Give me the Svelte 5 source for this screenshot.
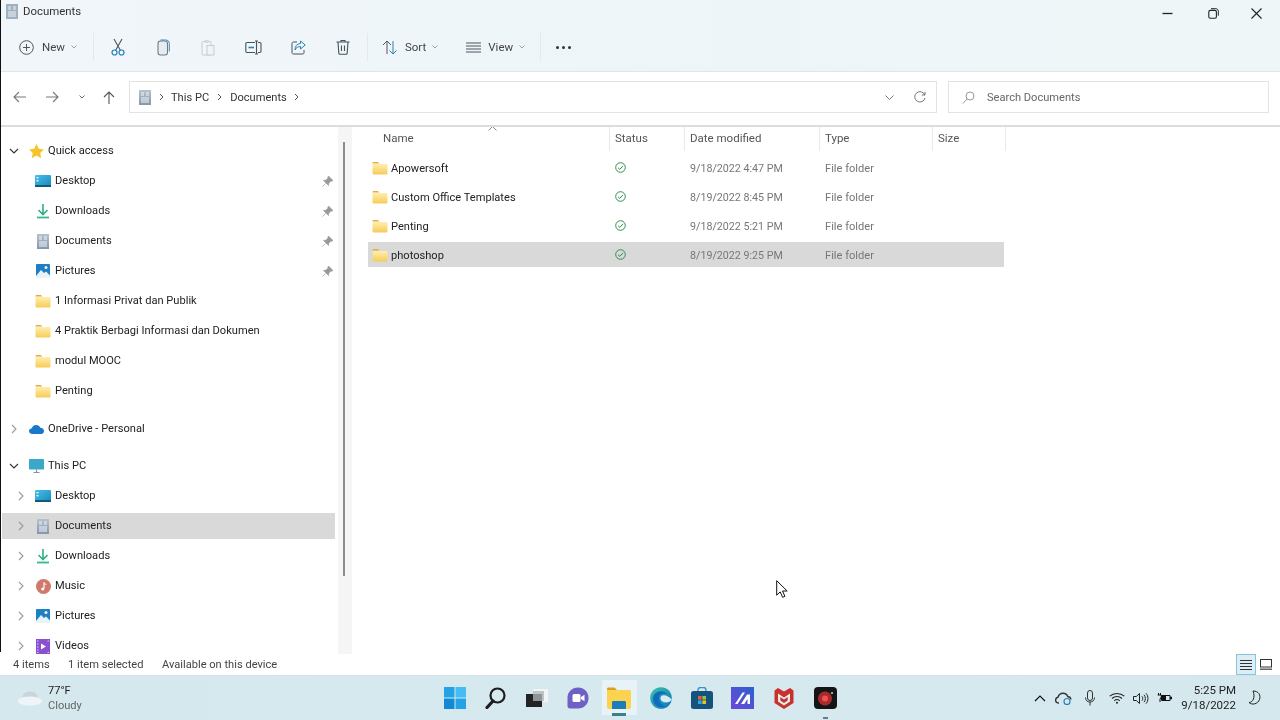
<script>
  const quick = [
    { icon: 'desktop', label: 'Desktop', pin: true },
    { icon: 'download', label: 'Downloads', pin: true },
    { icon: 'doc', label: 'Documents', pin: true },
    { icon: 'pictures', label: 'Pictures', pin: true },
    { icon: 'folder', label: '1 Informasi Privat dan Publik' },
    { icon: 'folder', label: '4 Praktik Berbagi Informasi dan Dokumen' },
    { icon: 'folder', label: 'modul MOOC' },
    { icon: 'folder', label: 'Penting' }
  ];
  const pc = [
    { icon: 'desktop', label: 'Desktop' },
    { icon: 'doc', label: 'Documents', active: true },
    { icon: 'download', label: 'Downloads' },
    { icon: 'music', label: 'Music' },
    { icon: 'pictures', label: 'Pictures' },
    { icon: 'videos', label: 'Videos' }
  ];
  const files = [
    { name: 'Apowersoft', date: '9/18/2022 4:47 PM' },
    { name: 'Custom Office Templates', date: '8/19/2022 8:45 PM' },
    { name: 'Penting', date: '9/18/2022 5:21 PM' },
    { name: 'photoshop', date: '8/19/2022 9:25 PM', selected: true }
  ];
</script>

{#snippet glyph(kind)}
  {#if kind === 'folder'}
    <svg class="ico" viewBox="0 0 16 14" width="16" height="14"><defs><linearGradient id="fg" x1="0" y1="0" x2="0" y2="1"><stop offset="0" stop-color="#ffeeb0"/><stop offset="1" stop-color="#f7cc55"/></linearGradient></defs><path d="M0.500 2.200c0-.7.500-1.200 1.200-1.200h3.600c.4 0 .7.100 1 .4L7.600 2.600H.5z" fill="#dfae3e"/><path d="M.5 3h14c.6 0 1 .4 1 1v8.200c0 .7-.5 1.300-1.200 1.300H1.700c-.7 0-1.200-.6-1.200-1.300z" fill="url(#fg)"/></svg>
  {:else if kind === 'desktop'}
    <svg class="ico" viewBox="0 0 16 12" width="16" height="12"><defs><linearGradient id="dk" x1="0" y1="0" x2="1" y2="1"><stop offset="0" stop-color="#46c2e8"/><stop offset="1" stop-color="#1a86bd"/></linearGradient></defs><rect width="16" height="12" rx="1" fill="url(#dk)"/><rect y="10" width="16" height="2" fill="#14587a"/><rect x="1.500" y="2" width="2" height="1.400" fill="#dff4fb"/><rect x="1.500" y="5" width="2" height="1.400" fill="#dff4fb"/></svg>
  {:else if kind === 'download'}
    <svg class="ico" viewBox="0 0 14 16" width="14" height="16"><path d="M7 1v10M2.500 7 7 11.500 11.500 7" fill="none" stroke="#2fae86" stroke-width="1.600"/><path d="M1 14.500h12" stroke="#35b78f" stroke-width="1.800"/></svg>
  {:else if kind === 'doc'}
    <svg class="ico" viewBox="0 0 12 15" width="12" height="15"><defs><linearGradient id="dg" x1="0" y1="0" x2="0" y2="1"><stop offset="0" stop-color="#b6c2cf"/><stop offset="1" stop-color="#8397ab"/></linearGradient></defs><rect width="12" height="15" fill="url(#dg)"/><path d="M2 3h3M2 5h3M7 3h3M7 5h3M2 8h8M2 10h8M2 12h8" stroke="#f2f5f8" stroke-width="1"/></svg>
  {:else if kind === 'pictures'}
    <svg class="ico" viewBox="0 0 14 14" width="14" height="14"><rect width="14" height="14" rx="1" fill="#1f7fc4"/><path d="M0 12 5 6l3 3 2-1.500 4 4V14H0z" fill="#e8f3fb"/><circle cx="10" cy="3.500" r="1.500" fill="#e8f3fb"/></svg>
  {:else if kind === 'music'}
    <svg class="ico" viewBox="0 0 15 15" width="15" height="15"><circle cx="7.500" cy="7.500" r="7.500" fill="#d0786a"/><path d="M8 3.500v6.300" stroke="#fff" stroke-width="1.200"/><circle cx="6.700" cy="10" r="1.500" fill="#fff"/><path d="M8 3.500c.5 1.500 2 1.500 2.500 2.500" stroke="#fff" fill="none"/></svg>
  {:else if kind === 'videos'}
    <svg class="ico" viewBox="0 0 14 15" width="14" height="15"><rect width="14" height="15" fill="#8b4fd0"/><path d="M5 4.500v6l5-3z" fill="#fff"/><path d="M1 2h1.500M1 5h1.500M1 8h1.500M1 11h1.500M1 13.500h1.500M11.500 2H13M11.500 13.500H13" stroke="#d9c4f3" stroke-width="1.200"/></svg>
  {:else if kind === 'pin'}
    <svg class="ico" viewBox="0 0 11 11" width="11" height="11"><path d="M6.500 0 11 4.500 9.800 5.200 8.800 5 6.700 7.500 6.600 9.600 1.400 4.400 3.500 4.300 6 2.200 5.800 1.200zM3.600 7.400.2 10.800" fill="#999" stroke="#999" stroke-width=".6"/></svg>
  {:else if kind === 'down'}
    <svg class="ico" viewBox="0 0 10 6" width="10" height="6"><path d="M1 1l4 4 4-4" fill="none" stroke="#333" stroke-width="1.100"/></svg>
  {:else if kind === 'right'}
    <svg class="ico" viewBox="0 0 6 10" width="6" height="10"><path d="M1 1l4 4-4 4" fill="none" stroke="#9a9a9a" stroke-width="1.100"/></svg>
  {:else if kind === 'minichev'}
    <svg class="ico mini" viewBox="0 0 6 4" width="6" height="4"><path d="M.5.500 3 3 5.500.5" fill="none" stroke="#999" stroke-width=".9"/></svg>
  {:else if kind === 'crumb'}
    <svg class="ico" viewBox="0 0 5 8" width="5" height="8"><path d="M1 1l3 3-3 3" fill="none" stroke="#555" stroke-width="1"/></svg>
  {/if}
{/snippet}

<div class="window">
  <header class="chrome">
    <div class="titlebar">
      <span class="title-ico">
        <svg viewBox="0 0 12 15" width="12" height="15"><rect width="12" height="15" fill="#9fb0c0"/><path d="M2 3h3M2 5h3M7 3h3M7 5h3M2 8h8M2 10h8M2 12h8" stroke="#eef2f5"/></svg>
      </span>
      <span class="title">Documents</span>
      <div class="winctl">
        <svg viewBox="0 0 11 11" width="11" height="11"><path d="M0.500 5.500h10" stroke="#222" stroke-width="1.300"/></svg>
        <svg viewBox="0 0 11 11" width="11" height="11"><rect x=".8" y="2.400" width="7.600" height="7.800" rx="1.500" fill="none" stroke="#222" stroke-width="1.100"/><path d="M3 .7h4.800c1.400 0 2.500 1 2.500 2.500v4.500" fill="none" stroke="#222" stroke-width="1"/></svg>
        <svg viewBox="0 0 11 11" width="11" height="11"><path d="M.5.500l10 10M10.500.500l-10 10" stroke="#222" stroke-width="1.100"/></svg>
      </div>
    </div>
    <div class="cmdbar">
      <span class="cmd new">
        <svg viewBox="0 0 15 15" width="15" height="15"><circle cx="7.500" cy="7.500" r="6.800" fill="none" stroke="#555" stroke-width="1"/><path d="M7.500 4v7M4 7.500h7" stroke="#555" stroke-width="1"/></svg>
        <span>New</span>{@render glyph('minichev')}
      </span>
      <i class="sep first"></i>
      <span class="tool"><svg viewBox="0 0 14 18" width="14" height="18"><path d="M3 1l6.500 11.500M11 1 4.500 12.500" fill="none" stroke="#4a5560" stroke-width="1.100"/><circle cx="3.500" cy="14.500" r="2.500" fill="none" stroke="#1c7fc0" stroke-width="1.200"/><circle cx="10.500" cy="14.500" r="2.500" fill="none" stroke="#1c7fc0" stroke-width="1.200"/></svg></span>
      <span class="tool"><svg viewBox="0 0 13 17" width="13" height="17"><rect x="1" y="2" width="9.500" height="14" rx="2.500" fill="#e6edf2" stroke="#6d7b86" stroke-width="1.100"/><path d="M3.500 1h5c2.500 0 3.800 1.300 3.800 3.500v8" fill="none" stroke="#4e86a8" stroke-width="1"/></svg></span>
      <span class="tool"><svg viewBox="0 0 14 17" width="14" height="17"><rect x="1" y="2.500" width="9" height="13.500" rx="1" fill="none" stroke="#c3cdd3" stroke-width="1"/><rect x="6" y="6.500" width="7" height="9.500" fill="#eff4f7" stroke="#c3cdd3" stroke-width="1"/><rect x="3.500" y="1" width="4" height="3" fill="#d3dbe0"/></svg></span>
      <span class="tool"><svg viewBox="0 0 17 15" width="17" height="15"><path d="M10 2.500H2c-.8 0-1.200.5-1.200 1.200v7.600c0 .7.400 1.200 1.200 1.200h8M13 2.500h1.800c.8 0 1.200.5 1.200 1.200v7.600c0 .7-.4 1.200-1.200 1.200H13M11.500 1v13M10 1h3M10 14h3" fill="none" stroke="#46525c" stroke-width="1.100"/><path d="M3.500 7.500h5.500" stroke="#2a80b5" stroke-width="1.600"/></svg></span>
      <span class="tool"><svg viewBox="0 0 15 15" width="15" height="15"><path d="M6 2H2.500C1.500 2 1 2.500 1 3.500v9c0 1 .5 1.500 1.500 1.500h9c1 0 1.500-.5 1.500-1.500V10" fill="none" stroke="#46525c" stroke-width="1"/><path d="M9.500 1l4.700 4-4.700 4V6.600C7 6.600 5 7.500 4 10c0-4 2-6.200 5.500-6.600z" fill="none" stroke="#2a80b5" stroke-width="1"/></svg></span>
      <span class="tool"><svg viewBox="0 0 14 16" width="14" height="16"><path d="M.5 3h13M5 3V1.500h4V3M2 3l.8 11c0 .8.500 1.300 1.200 1.300h6c.7 0 1.200-.5 1.200-1.300L12 3M5.500 6.500v5.500M8.500 6.500v5.500" fill="none" stroke="#46525c" stroke-width="1.100"/></svg></span>
      <i class="sep second"></i>
      <span class="cmd sort">
        <svg viewBox="0 0 16 15" width="16" height="15"><path d="M5 14V1M1 5l4-4 4 4" fill="none" stroke="#556" stroke-width="1"/><path d="M11 1v13M7.500 10.500 11 14l3.500-3.500" fill="none" stroke="#2a80b5" stroke-width="1"/></svg>
        <span>Sort</span>{@render glyph('minichev')}
      </span>
      <span class="cmd view">
        <svg viewBox="0 0 15 11" width="15" height="11"><path d="M0 1h15M0 4h15M0 7h15M0 10h15" stroke="#4a5560" stroke-width="1"/></svg>
        <span>View</span>{@render glyph('minichev')}
      </span>
      <i class="sep third"></i>
      <span class="dots"><b></b><b></b><b></b></span>
    </div>
  </header>

  <section class="addr">
    <div class="navbtns">
      <svg viewBox="0 0 13 12" width="13" height="12"><path d="M13 6H1M6 1 1 6l5 5" fill="none" stroke="#777" stroke-width="1.100"/></svg>
      <svg viewBox="0 0 13 12" width="13" height="12"><path d="M0 6h12M7 1l5 5-5 5" fill="none" stroke="#777" stroke-width="1.100"/></svg>
      <svg viewBox="0 0 6 4" width="6" height="4"><path d="M.5.500 3 3 5.500.5" fill="none" stroke="#666" stroke-width="1"/></svg>
      <svg viewBox="0 0 12 13" width="12" height="13"><path d="M6 13V1M1 6l5-5 5 5" fill="none" stroke="#555" stroke-width="1.100"/></svg>
    </div>
    <div class="pathbox">
      {@render glyph('doc')}
      {@render glyph('crumb')}
      <span>This PC</span>
      {@render glyph('crumb')}
      <span>Documents</span>
      {@render glyph('crumb')}
      <span class="spacer"></span>
      <svg class="drop" viewBox="0 0 9 5" width="9" height="5"><path d="M.5.500 4.500 4.500 8.500.5" fill="none" stroke="#777" stroke-width="1"/></svg>
      <svg class="refresh" viewBox="0 0 12 12" width="12" height="12"><path d="M10.800 4A5.200 5.200 0 1 0 11 7M11 .8V4H7.800" fill="none" stroke="#777" stroke-width="1"/></svg>
    </div>
    <div class="searchbox">
      <svg viewBox="0 0 13 13" width="13" height="13"><circle cx="8" cy="5" r="4" fill="none" stroke="#999" stroke-width="1"/><path d="M5 8 1 12.500" stroke="#999" stroke-width="1"/></svg>
      <span>Search Documents</span>
    </div>
  </section>

  <main class="body">
    <nav class="nav">
      <div class="row top">
        <span class="chev">{@render glyph('down')}</span>
        <span class="slot"><svg viewBox="0 0 15 14" width="15" height="14"><path d="M7.500 0 9.800 4.800 15 5.400 11.200 9l1 5.200-4.700-2.600-4.700 2.600 1-5.200L0 5.400l5.200-.6z" fill="#f6c428"/></svg></span>
        <span>Quick access</span>
      </div>
      {#each quick as item}
        <div class="row sub">
          <span class="chev"></span>
          <span class="slot">{@render glyph(item.icon)}</span>
          <span>{item.label}</span>
          {#if item.pin}<span class="pin">{@render glyph('pin')}</span>{/if}
        </div>
      {/each}
      <div class="row top onedrive">
        <span class="chev">{@render glyph('right')}</span>
        <span class="slot"><svg viewBox="0 0 15 9" width="15" height="9"><path d="M3.500 9C1.500 9 0 7.800 0 6.200 0 4.800 1 3.800 2.500 3.600 3.200 1.500 5 0 7.200 0c2 0 3.500 1.100 4.200 2.800C13.500 3 15 4.300 15 6c0 1.700-1.300 3-3 3z" fill="#1978c8"/></svg></span>
        <span>OneDrive - Personal</span>
      </div>
      <div class="row top thispc">
        <span class="chev">{@render glyph('down')}</span>
        <span class="slot"><svg viewBox="0 0 15 14" width="15" height="14"><rect width="15" height="10.500" rx=".8" fill="#3ba7c9"/><path d="M7.500 10.500v2.500M4.500 13.500h6" stroke="#7f97a3" stroke-width="1.200"/></svg></span>
        <span>This PC</span>
      </div>
      {#each pc as item}
        <div class="row sub" class:active={item.active}>
          <span class="chev">{@render glyph('right')}</span>
          <span class="slot">{@render glyph(item.icon)}</span>
          <span>{item.label}</span>
        </div>
      {/each}
    </nav>
    <div class="scroll"><i></i></div>
    <div class="list">
      <div class="head">
        <span class="col-name">Name</span>
        <span class="col">Status</span>
        <span class="col">Date modified</span>
        <span class="col">Type</span>
        <span class="col last">Size</span>
        <svg class="sortmark" viewBox="0 0 9 5" width="9" height="5"><path d="M.5 4.500 4.500.5l4 4" fill="none" stroke="#888" stroke-width="1"/></svg>
      </div>
      {#each files as f}
        <div class="file" class:selected={f.selected}>
          <span class="fname">{@render glyph('folder')}<span>{f.name}</span></span>
          <span class="fstatus"><svg viewBox="0 0 11 11" width="11" height="11"><circle cx="5.500" cy="5.500" r="4.800" fill="none" stroke="#2f8f4e" stroke-width="1"/><path d="M3 5.700l1.800 1.700L8 3.900" fill="none" stroke="#2f8f4e" stroke-width="1"/></svg></span>
          <span class="fmeta date">{f.date}</span>
          <span class="fmeta">File folder</span>
        </div>
      {/each}
      <svg class="cursor" viewBox="0 0 12 18" width="12" height="18"><path d="M.7.700v14.500l3.500-3.300 2.400 5.400 2.300-1-2.400-5.300h4.700z" fill="#fff" stroke="#111" stroke-width="1"/></svg>
    </div>
  </main>

  <footer class="status">
    <span class="s1">4 items</span>
    <span class="s2">1 item selected</span>
    <span>Available on this device</span>
    <span class="views">
      <span class="vbtn on"><svg viewBox="0 0 12 10" width="12" height="10"><path d="M0 .5h12M0 3.500h12M0 6.500h12M0 9.500h12" stroke="#333" stroke-width="1"/></svg></span>
      <span class="vbtn"><svg viewBox="0 0 12 11" width="12" height="11"><rect x=".5" y=".5" width="11" height="7.500" fill="none" stroke="#333"/><path d="M0 10.200h12" stroke="#555" stroke-width="1.400"/></svg></span>
    </span>
  </footer>

  <footer class="taskbar">
    <div class="weather">
      <svg viewBox="0 0 24 15" width="24" height="15"><ellipse cx="12" cy="6" rx="7.500" ry="5.500" fill="#c9d5de"/><ellipse cx="12" cy="10" rx="12" ry="4.500" fill="#eef4f7"/></svg>
      <span class="wtext"><span>77°F</span><span class="cloudy">Cloudy</span></span>
    </div>
    <div class="apps">
      <span class="app"><svg viewBox="0 0 22 22" width="22" height="22"><rect width="10.500" height="10.500" fill="#23a3e4"/><rect x="11.500" width="10.500" height="10.500" fill="#45bdf2"/><rect y="11.500" width="10.500" height="10.500" fill="#1389d3"/><rect x="11.500" y="11.500" width="10.500" height="10.500" fill="#21a3e6"/></svg></span>
      <span class="app"><svg viewBox="0 0 22 22" width="22" height="22"><circle cx="12.500" cy="8.500" r="7" fill="none" stroke="#1d1d1d" stroke-width="2.200"/><path d="M8 14 2 20.500" stroke="#1d1d1d" stroke-width="3.200" stroke-linecap="round"/></svg></span>
      <span class="app"><svg viewBox="0 0 22 18" width="22" height="18"><rect x="7" y="0" width="15" height="13" fill="#f2f5f6"/><rect x="7" y="2" width="11" height="10" fill="#c0c3c5"/><rect y="5" width="16" height="13" fill="#232323"/><rect x="7" y="5" width="9" height="7" fill="#8f9497"/></svg></span>
      <span class="app"><svg viewBox="0 0 22 22" width="22" height="22"><path d="M11 .5C5 .5.500 5 .500 10.500V19c0 1.500 1 2.500 2.500 2.500h8c6 0 10.500-4.500 10.500-10.500S17 .5 11 .5z" fill="#6e60c4"/><rect x="5.500" y="7" width="8" height="8" rx="1.500" fill="#fff"/><path d="M14 10l3.500-2.200v6.400L14 12z" fill="#fff"/></svg></span>
      <span class="app current"><svg viewBox="0 0 24 22" width="24" height="22"><path d="M0 2c0-1 .6-1.500 1.500-1.500h6L10 3H0z" fill="#d9a024"/><path d="M0 3h22.500c.8 0 1.500.7 1.500 1.500V20c0 1-.7 2-1.700 2H1.500C.6 22 0 21 0 20z" fill="#fbd34e"/><path d="M5 15.500c0-1 .6-1.500 1.500-1.500h11c.9 0 1.500.5 1.500 1.500V22H5z" fill="#1c7eb8"/></svg><i class="run wide"></i></span>
      <span class="app"><svg viewBox="0 0 22 22" width="22" height="22"><defs><linearGradient id="eg" x1="0" y1="0" x2="1" y2="1"><stop offset="0" stop-color="#37c6a0"/><stop offset="1" stop-color="#1170c4"/></linearGradient></defs><circle cx="11" cy="11" r="10.800" fill="url(#eg)"/><path d="M21.800 12.500c-1 2-3.200 3-5.500 3-3.500 0-5.800-1.800-5.800-4.200 0-1.800 1.400-3 3.400-3 1.800 0 4 .8 7.900 4.200z" fill="#d8ebf1"/><path d="M4 8C7 3.500 14 3 17 7.500c-3-1.500-7-1-7.800 2.500-.6 3.500 1 7 5.500 9.200C9 22 3 18 3 12c0-1.500.3-3 1-4z" fill="#0f6ac0"/></svg></span>
      <span class="app"><svg viewBox="0 0 22 22" width="22" height="22"><path d="M7 5V3c0-1.500 1-2.500 2.500-2.500h3C14 .5 15 1.500 15 3v2" fill="none" stroke="#3f93bd" stroke-width="1.400"/><rect y="4" width="22" height="18" rx="2.500" fill="#15537f"/><rect x="7" y="9" width="3.600" height="3.600" fill="#e95b3a"/><rect x="11.400" y="9" width="3.600" height="3.600" fill="#8cc63f"/><rect x="7" y="13.400" width="3.600" height="3.600" fill="#2ea8e5"/><rect x="11.400" y="13.400" width="3.600" height="3.600" fill="#f5bd1f"/></svg></span>
      <span class="app"><svg viewBox="0 0 23 22" width="23" height="22"><defs><linearGradient id="mg" x1="0" y1="1" x2="1" y2="0"><stop offset="0" stop-color="#7048d8"/><stop offset="1" stop-color="#2a60d0"/></linearGradient></defs><rect width="23" height="22" fill="url(#mg)"/><path d="M4 17 11.500 5.500h2.500L6.500 17zM10 17 16 7.500h3V17h-2.500v-5l-3.200 5z" fill="#fff"/></svg></span>
      <span class="app"><svg viewBox="0 0 20 22" width="20" height="22"><path d="M.5 3.500 4 1l6 3.500L16 1l3.500 2.500V16L10 22 .5 16z" fill="#c9302e"/><path d="M4 6.500l6 4 6-4v8L10 18.500l-6-4z" fill="#e9eff1"/><path d="M6.300 10l3.700 2.500L13.700 10v3.400L10 16l-3.700-2.600z" fill="#c9302e"/></svg></span>
      <span class="app"><svg viewBox="0 0 23 22" width="23" height="22"><rect width="23" height="22" rx="4" fill="#151515"/><circle cx="11" cy="11.500" r="7" fill="#a92a2c"/><circle cx="11" cy="11.500" r="3" fill="#f05050"/><circle cx="18" cy="6" r="1" fill="#cfcfcf"/></svg><i class="run"></i></span>
    </div>
    <div class="tray">
      <span><svg viewBox="0 0 12 7" width="12" height="7"><path d="M1 6l5-5 5 5" fill="none" stroke="#111" stroke-width="1.200"/></svg></span>
      <span><svg viewBox="0 0 17 13" width="17" height="13"><path d="M4 11C2 11 .6 9.800.6 8c0-1.500 1-2.600 2.400-2.800C3.700 2.800 5.500 1.200 8 1.200c2.200 0 4 1.300 4.700 3.300 1.600.2 3 1.200 3.200 3" fill="none" stroke="#333" stroke-width="1.400"/><circle cx="12" cy="9.500" r="3" fill="none" stroke="#2a7fb0" stroke-width="1.100"/></svg></span>
      <span><svg viewBox="0 0 10 16" width="10" height="16"><rect x="2.500" y=".5" width="5" height="10" rx="2.500" fill="none" stroke="#333"/><path d="M.5 7.500c0 3 2 4.500 4.500 4.500s4.500-1.500 4.500-4.500M5 12v3.500" fill="none" stroke="#333"/></svg></span>
      <span><svg viewBox="0 0 16 12" width="16" height="12"><path d="M.7 4.200c4-3.700 10.600-3.700 14.600 0M3 6.500c2.800-2.600 7.200-2.600 10 0M5.300 8.800c1.500-1.400 3.900-1.400 5.400 0" fill="none" stroke="#222" stroke-width="1.100"/><circle cx="8" cy="10.800" r="1" fill="#222"/></svg></span>
      <span><svg viewBox="0 0 16 13" width="16" height="13"><path d="M.5 4.500h2.800L6.500 1.500v10l-3.200-3H.5z" fill="none" stroke="#222"/><path d="M9 4.300c1 1.300 1 3.100 0 4.400M11 2.800c1.800 2 1.800 5.400 0 7.400M13 1.300c2.600 3 2.600 7.400 0 10.400" fill="none" stroke="#222"/></svg></span>
      <span><svg viewBox="0 0 15 12" width="15" height="12"><path d="M4.500 3.500H13v5H4.500z" fill="none" stroke="#111"/><rect x="5" y="4" width="4" height="4" fill="#111"/><path d="M13.500 5h1v2h-1zM1.500 1v2M3.500 1v2M.7 3h3.600v2L3 7v3" stroke="#111" fill="none"/></svg></span>
      <span class="clock"><span>5:25 PM</span><span>9/18/2022</span></span>
      <span class="moonbox"><svg viewBox="0 0 14 16" width="14" height="16"><path d="M5 1c5.500 0 8 4 6.500 8.500S4 15.500 1 12.500C5 12.500 7.500 7 5 1z" fill="none" stroke="#222"/></svg></span>
    </div>
  </footer>
</div>

<style>
  :global(body) { margin: 0; background: #fff; }
  .window {
    width: 1280px; height: 720px; display: flex; flex-direction: column; overflow: hidden; position: relative;
    font: 11.100px/16px Roboto, "Liberation Sans", sans-serif; color: #222; background: #fff;
    filter: blur(.3px);
  }
  .window::before { content: ""; position: absolute; left: 0; top: 0; width: 1px; height: 652px; background: #111; z-index: 2; }
  svg { display: block; flex: none; }

  .chrome { height: 72px; flex: none; box-sizing: border-box; background: linear-gradient(90deg, #f1f6fa, #edf5f8 60%, #eef6f8); border-bottom: 1px solid #dde6ea; }
  .titlebar { height: 23px; display: flex; align-items: center; }
  .title-ico { margin-left: 6px; }
  .title { margin-left: 5px; color: #333; font-size: 11.400px; margin-top: -2px; }
  .winctl { margin-left: auto; display: flex; gap: 34px; padding-right: 18px; padding-top: 3px; }
  .winctl svg:nth-child(2) { margin-left: 1px; }
  .winctl svg:nth-child(3) { margin-left: -2px; }

  .cmdbar { height: 48px; display: flex; align-items: center; color: #444; font-size: 11.500px; }
  .cmd { display: flex; align-items: center; }
  .cmd .mini { margin-left: 6px; }
  .new { margin-left: 19px; }
  .new > span { margin-left: 8px; }
  .sep { width: 1px; height: 28px; background: #e2e9ed; display: block; }
  .sep.first { margin-left: 16px; margin-right: 2px; }
  .tool { width: 45px; display: flex; justify-content: center; }
  .sep.second { margin-left: 1px; }
  .sort { margin-left: 14px; }
  .sort > span { margin-left: 7px; }
  .view { margin-left: 28px; }
  .view > span { margin-left: 7px; }
  .sep.third { margin-left: 15px; }
  .dots { margin-left: 15px; display: flex; gap: 3px; }
  .dots b { width: 3px; height: 3px; border-radius: 50%; background: #333; display: block; }

  .addr { height: 55px; flex: none; display: flex; align-items: center; border-bottom: 2px solid #dcdcdc; box-sizing: border-box; padding-bottom: 3px; }
  .navbtns { width: 129px; display: flex; align-items: center; padding-left: 13px; box-sizing: border-box; }
  .navbtns svg:nth-child(2) { margin-left: 20px; }
  .navbtns svg:nth-child(3) { margin-left: 20px; }
  .navbtns svg:nth-child(4) { margin-left: 18px; }
  .pathbox { width: 808px; height: 32px; box-sizing: border-box; border: 1px solid #e3e3e3; display: flex; align-items: center; padding-left: 9px; color: #333; flex: none; }
  .pathbox > span:not(.spacer), .searchbox > span { padding-top: 2px; }
  .pathbox > :global(svg:nth-child(2)) { margin: 0 7px 0 8px; }
  .pathbox > :global(svg:nth-child(4)) { margin: 0 8px; }
  .pathbox > :global(svg:nth-child(6)) { margin: 0 0 0 7px; }
  .spacer { flex: 1; }
  .drop { margin-right: 20px; }
  .refresh { margin-right: 10px; }
  .searchbox { margin-left: 11px; width: 321px; height: 32px; box-sizing: border-box; border: 1px solid #e3e3e3; display: flex; align-items: center; padding-left: 13px; gap: 12px; color: #666; flex: none; }

  .body { flex: 1; min-height: 0; display: flex; }
  .nav { width: 338px; flex: none; overflow: hidden; padding-top: 8px; box-sizing: border-box; }
  .row { height: 30px; display: flex; align-items: center; box-sizing: border-box; white-space: nowrap; color: #222; padding-top: 2px; }
  .row.top { padding-left: 8px; }
  .row.sub { padding-left: 15px; }
  .onedrive { margin-top: 8px; }
  .thispc { margin-top: 7px; }
  .chev { width: 12px; display: flex; justify-content: center; flex: none; }
  .slot { width: 16px; margin-left: 8px; margin-right: 4px; display: flex; justify-content: center; flex: none; }
  .pin { margin-left: auto; margin-right: 5px; }
  .row.active { background: linear-gradient(#d9d9d9, #d9d9d9) no-repeat 2px 3px / 333px 26px; }

  .scroll { width: 14px; flex: none; background: #f5f5f5; }
  .scroll i { display: block; width: 2px; height: 434px; background: #8c8c8c; margin: 15px 0 0 5px; }

  .list { flex: 1; position: relative; padding-left: 16px; overflow: hidden; }
  .head { display: grid; grid-template-columns: 241px 75px 135px 113px 74px; width: 638px; height: 24px; margin-bottom: 2px; color: #555; position: relative; font-size: 11.500px; }
  .col-name { padding-left: 15px; line-height: 22px; }
  .col { border-left: 1px solid #e9e9e9; padding-left: 5px; line-height: 22px; }
  .col.last { border-right: 1px solid #e9e9e9; }
  .sortmark { position: absolute; left: 120px; top: -1px; }

  .file { display: grid; grid-template-columns: 241px 75px 135px 113px; width: 636px; height: 25px; margin-top: 4px; align-items: center; }
  .file.selected { background: #d9d9d9; }
  .fname { display: flex; align-items: center; padding-left: 4px; }
  .fname > span { margin-left: 3px; color: #222; padding-top: 2px; }
  .fstatus { padding-left: 6px; }
  .fmeta { padding-left: 6px; padding-top: 2px; color: #777; }
  .fmeta.date { font-size: 10.700px; }
  .cursor { position: absolute; left: 424px; top: 453px; }

  .status { height: 21px; flex: none; display: flex; align-items: center; padding-left: 13px; color: #444; }
  .s1 { width: 55px; }
  .s2 { width: 94px; }
  .views { margin-left: auto; display: flex; height: 21px; padding-right: 4px; }
  .vbtn { width: 20px; display: flex; align-items: center; justify-content: center; box-sizing: border-box; border: 1px solid transparent; }
  .vbtn.on { background: #dbeef6; border-color: #88c4de; }

  .taskbar { height: 45px; flex: none; display: grid; grid-template-columns: 434px 412px 1fr; background: linear-gradient(90deg, #d5e8ee, #d6e9ef 50%, #d5e8ee); border-top: 1px solid #d3e2e8; box-sizing: border-box; }
  .weather { display: flex; align-items: center; padding-left: 18px; gap: 6px; color: #222; }
  .wtext { display: flex; flex-direction: column; line-height: 15px; }
  .cloudy { color: #666; }
  .apps { display: grid; grid-template-columns: repeat(10, 41.200px); }
  .app { display: flex; align-items: center; justify-content: center; position: relative; }
  .app.current { background: #e8f3f7; margin: 4px 3px 5px 3px; }
  .run { position: absolute; bottom: 1px; left: 50%; width: 5px; height: 2px; margin-left: -2.500px; background: #6c7c84; }
  .run.wide { width: 14px; margin-left: -7px; height: 3px; bottom: -1px; background: #3d7f8c; }
  .tray { display: grid; grid-template-columns: 22.500px 24.500px 27.500px 26px 23px 23.500px 60px 38px; justify-content: end; padding-right: 6px; }
  .tray > span { display: flex; align-items: center; justify-content: center; }
  .tray > .clock { flex-direction: column; align-items: flex-end; line-height: 15px; color: #222; font-size: 11.500px; }
</style>
